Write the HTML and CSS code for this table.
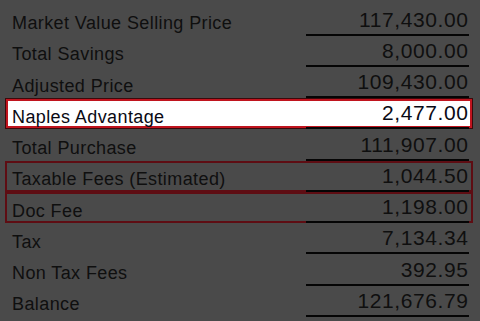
FILE: index.html
```html
<!DOCTYPE html>
<html>
<head>
<meta charset="utf-8">
<link rel="stylesheet" href="styles.css">
</head>
<body>
<div class="sheet">
  <div class="row"><span class="label">Market Value Selling Price</span><span class="value">117,430.00</span></div>
  <div class="row"><span class="label">Total Savings</span><span class="value">8,000.00</span></div>
  <div class="row"><span class="label">Adjusted Price</span><span class="value">109,430.00</span></div>
  <div class="row highlight"><span class="label">Naples Advantage</span><span class="value">2,477.00</span></div>
  <div class="row"><span class="label">Total Purchase</span><span class="value">111,907.00</span></div>
  <div class="row boxed"><span class="label">Taxable Fees (Estimated)</span><span class="value">1,044.50</span></div>
  <div class="row boxed"><span class="label">Doc Fee</span><span class="value">1,198.00</span></div>
  <div class="row"><span class="label">Tax</span><span class="value">7,134.34</span></div>
  <div class="row"><span class="label">Non Tax Fees</span><span class="value">392.95</span></div>
  <div class="row"><span class="label">Balance</span><span class="value">121,676.79</span></div>
</div>
</body>
</html>
```
FILE: styles.css
```css
html, body {
  margin: 0;
  padding: 0;
  background: #4a4a4a;
}
body {
  width: 480px;
  height: 321px;
  overflow: hidden;
  font-family: "Liberation Sans", Arial, sans-serif;
  color: #0f0f0f;
}
.sheet {
  padding-top: 4.25px;
  display: flex;
  flex-direction: column;
}
.row {
  height: 31.25px;
  margin: 0 7px 0 5px;
  padding: 0 5px 0 7px;
  display: flex;
  align-items: flex-end;
  box-sizing: border-box;
}
.label {
  flex: 1;
  font-size: 18px;
  line-height: 20px;
  letter-spacing: 0.4px;
  margin-bottom: 2.5px;
  white-space: nowrap;
}
.value {
  width: 163px;
  height: 100%;
  box-sizing: border-box;
  display: flex;
  align-items: flex-end;
  justify-content: flex-end;
  font-size: 21px;
  line-height: 22px;
  letter-spacing: 0.6px;
  padding: 0 0 3px 0;
  margin-right: -0.5px;
  border-bottom: 2px solid #050505;
}
.highlight {
  background: #ffffff;
  box-shadow: inset 0 0 0 1px #3a0a0c, inset 0 0 0 3px #c0141e;
  color: #0a0a14;
}
.boxed {
  box-shadow: inset 0 0 0 2px #5e0d13;
}
```
